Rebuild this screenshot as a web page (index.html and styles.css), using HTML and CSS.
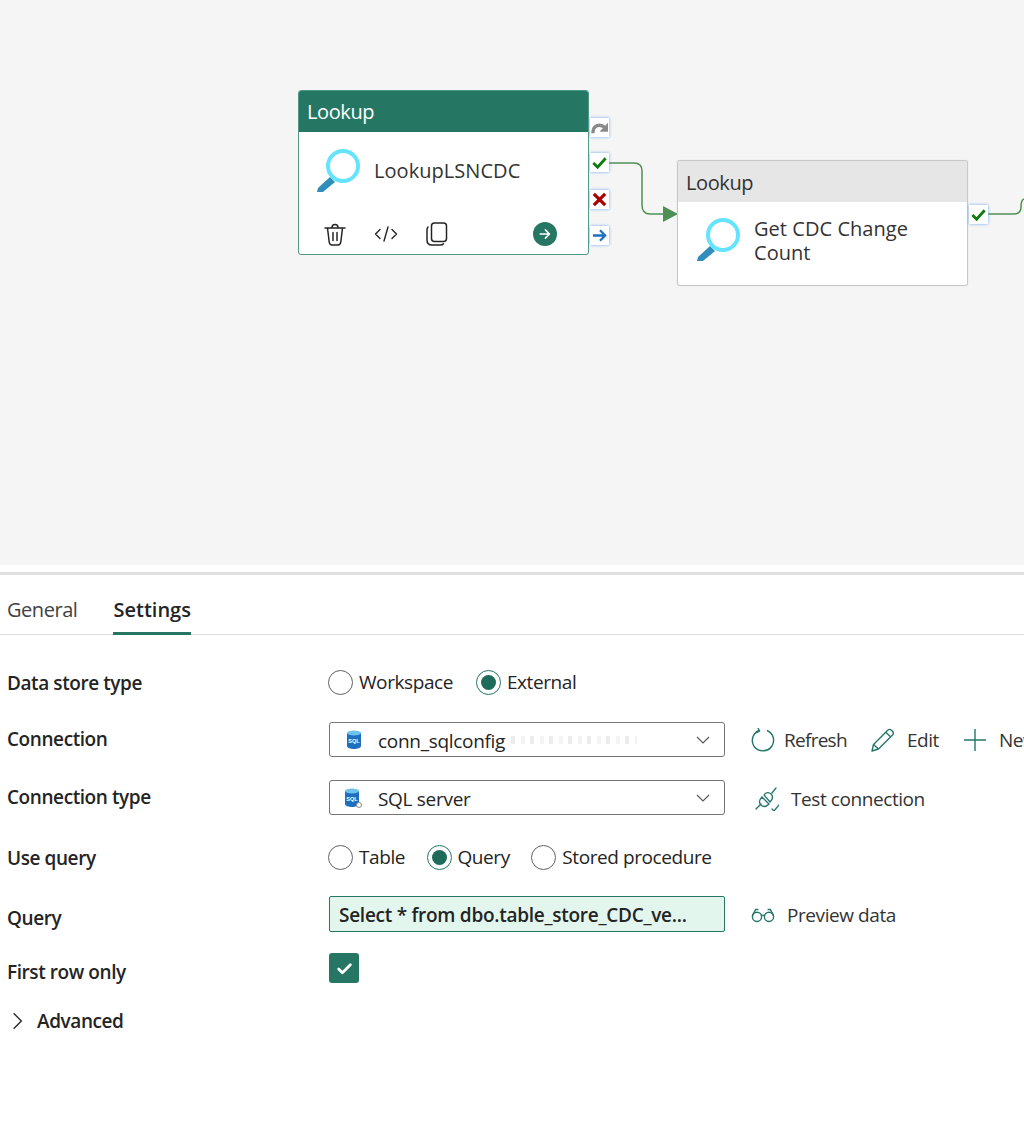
FILE: index.html
```html
<!DOCTYPE html>
<html lang="en">
<head>
<meta charset="utf-8">
<title>Lookup settings</title>
<link rel="stylesheet" href="styles.css">
</head>
<body>
<svg width="0" height="0" class="defs">
  <defs>
    <symbol id="lens" viewBox="0 0 44 44">
      <path d="M1 43 L2 39 L14 28 L19 33 L7 43 Z" fill="#2f8fba"/>
      <circle cx="27" cy="17" r="15" fill="none" stroke="#64e4ff" stroke-width="4"/>
    </symbol>
    <symbol id="cyl" viewBox="0 0 16 20">
      <path d="M1 3 V16 C1 20 15 20 15 16 V3 Z" fill="#1f6fc0"/>
      <ellipse cx="8" cy="3" rx="7" ry="2.600" fill="#6cc4ee"/>
      <text x="8" y="13" class="sql-txt">SQL</text>
    </symbol>
  </defs>
</svg>

<section class="canvas">
  <article class="node node-active node-a">
    <header class="node-head">Lookup</header>
    <div class="node-body">
      <svg class="lens"><use href="#lens"/></svg>
      <span class="node-name">LookupLSNCDC</span>
    </div>
    <div class="node-tools">
      <svg class="tool" viewBox="0 0 24 24" fill="none" stroke="#242424" stroke-width="1.500" stroke-linecap="round" stroke-linejoin="round"><path d="M2 6 H22 M9 5.500 C9 1.500 15 1.500 15 5.500 M4.500 6 L6.200 20 C6.500 22 7.500 23 9 23 H15 C16.500 23 17.500 22 17.800 20 L19.500 6 M10 10.500 V18.500 M14 10.500 V18.500"/></svg>
      <svg class="tool" viewBox="0 0 24 24" fill="none" stroke="#242424" stroke-width="1.400" stroke-linecap="round" stroke-linejoin="round"><path d="M6 7.500 L1.500 12 L6 16.500 M18 7.500 L22.500 12 L18 16.500 M14 5 L10 19"/></svg>
      <svg class="tool" viewBox="0 0 24 24" fill="none" stroke="#242424" stroke-width="1.500" stroke-linecap="round" stroke-linejoin="round"><rect x="6.500" y="1" width="15" height="18.500" rx="3"/><path d="M3 5 C2 6 2 7 2 8 V18 C2 21.500 4 23 7 23 H15 C17 23 18 22.500 18.500 21.800"/></svg>
      <span class="go"><svg viewBox="0 0 24 24" fill="none" stroke="#fff" stroke-width="2" stroke-linecap="round" stroke-linejoin="round"><path d="M5.500 12 H18 M12.500 6.500 L18 12 L12.500 17.500"/></svg></span>
    </div>
  </article>

  <span class="port p1"><svg viewBox="0 0 18 18" fill="none" stroke="#8a8a8a" stroke-width="3.600"><path d="M2 15 C2 7 9 4 15 9.500"/><path d="M18 4 V13.500 H9" fill="#8a8a8a" stroke="none"/></svg></span>
  <span class="port p2"><svg viewBox="0 0 18 18" fill="none" stroke="#107c10" stroke-width="3"><path d="M2.500 9.500 L7 14 L15.500 4.500"/></svg></span>
  <span class="port p3"><svg viewBox="0 0 18 18" fill="none" stroke="#a80000" stroke-width="3.400"><path d="M3 3 L15 15 M15 3 L3 15"/></svg></span>
  <span class="port p4"><svg viewBox="0 0 18 18" fill="none" stroke="#1f6fc0" stroke-width="2.400"><path d="M2 9 H15 M9.500 3.500 L15 9 L9.500 14.500"/></svg></span>

  <svg class="wires" viewBox="0 0 1024 565" fill="none" stroke="#4f8f55" stroke-width="1.500">
    <path d="M608 163 H634 Q642 163 642 171 V205 Q642 214 650 214 H664"/>
    <path d="M663 206 L678 214 L663 222 Z" fill="#4f8f55" stroke="none"/>
    <path d="M988 214 H1014 Q1021 214 1021 207 Q1021 200 1024 199"/>
  </svg>

  <article class="node node-b">
    <header class="node-head">Lookup</header>
    <div class="node-body">
      <svg class="lens"><use href="#lens"/></svg>
      <span class="node-name">Get CDC Change Count</span>
    </div>
  </article>
  <span class="port p5"><svg viewBox="0 0 18 18" fill="none" stroke="#107c10" stroke-width="3"><path d="M2.500 9.500 L7 14 L15.500 4.500"/></svg></span>
</section>

<section class="panel">
  <nav class="tabs">
    <span class="tab">General</span>
    <span class="tab tab-on">Settings</span>
  </nav>
  <div class="form">
    <div class="row r1">
      <label class="lab">Data store type</label>
      <div class="ctl radios">
        <span class="radio"><i class="dot"></i>Workspace</span>
        <span class="radio on"><i class="dot"></i>External</span>
      </div>
    </div>
    <div class="row r2">
      <label class="lab">Connection</label>
      <div class="ctl">
        <div class="select">
          <svg class="sql"><use href="#cyl"/></svg>
          <span class="val">conn_sqlconfig</span><span class="smudge"></span>
          <svg class="chev" viewBox="0 0 14 8" fill="none" stroke="#555" stroke-width="1.100"><path d="M1 1 L7 7 L13 1"/></svg>
        </div>
        <div class="acts">
          <span class="act act-refresh"><svg class="ic" viewBox="0 0 24 24" fill="none" stroke="#24756a" stroke-width="1.400"><path d="M8 2.500 C1 5.500 -0.500 14 3.500 19 C8 24.500 17 24 21 18 C24.500 12 22 5 16 2.500"/><path d="M7 0 L8.500 3 L5 5"/></svg>Refresh</span>
          <span class="act"><svg class="ic" viewBox="0 0 24 24" fill="none" stroke="#24756a" stroke-width="1.400" stroke-linejoin="round"><path d="M1 23 L2.500 16.500 L17 2 C19 0 23.500 4 22 6.500 L7.500 21 Z M15 4.500 L19.800 9 M2.500 16.500 L7.500 21"/></svg>Edit</span>
          <span class="act"><svg class="ic" viewBox="0 0 24 24" fill="none" stroke="#24756a" stroke-width="1.400"><path d="M12 1 V23 M1 12 H23"/></svg>New</span>
        </div>
      </div>
    </div>
    <div class="row r3">
      <label class="lab">Connection type</label>
      <div class="ctl">
        <div class="select">
          <svg class="sql sql-b"><use href="#cyl"/></svg>
          <i class="gear"></i>
          <span class="val">SQL server</span>
          <svg class="chev" viewBox="0 0 14 8" fill="none" stroke="#555" stroke-width="1.100"><path d="M1 1 L7 7 L13 1"/></svg>
        </div>
        <div class="acts acts-test">
          <span class="act"><svg class="ic" viewBox="0 0 24 24" fill="none" stroke="#24756a" stroke-width="1.300" stroke-linecap="round"><path d="M1 22 L6 17 M7 10 L14 17 C11 20 8 20 6 18 C4 16 4 13 7 10 Z M9 8 C11 5 14 5 16 7 C18 9 18 12 15 15 Z M17 6 L21 1 M17 22 L19 24 L24 18"/></svg>Test connection</span>
        </div>
      </div>
    </div>
    <div class="row r4">
      <label class="lab">Use query</label>
      <div class="ctl radios radios-q">
        <span class="radio"><i class="dot"></i>Table</span>
        <span class="radio on"><i class="dot"></i>Query</span>
        <span class="radio"><i class="dot"></i>Stored procedure</span>
      </div>
    </div>
    <div class="row r5">
      <label class="lab">Query</label>
      <div class="ctl">
        <div class="query">Select * from dbo.table_store_CDC_ve...</div>
        <div class="acts acts-preview">
          <span class="act"><svg class="ic ic-g" viewBox="0 0 26 16" fill="none" stroke="#24756a" stroke-width="1.500"><circle cx="6.500" cy="10" r="5"/><circle cx="19.500" cy="10" r="5"/><path d="M11 9 C12 8 14 8 15 9 M1.500 9 L5 2 H8 M24.500 9 L21 2 H18"/></svg>Preview data</span>
        </div>
      </div>
    </div>
    <div class="row r6">
      <label class="lab">First row only</label>
      <div class="ctl">
        <span class="check"><svg viewBox="0 0 16 16" fill="none" stroke="#fff" stroke-width="2.600" stroke-linecap="round" stroke-linejoin="round"><path d="M2.500 8.500 L6 12 L13.500 4.500"/></svg></span>
      </div>
    </div>
    <div class="adv">
      <svg class="adv-ic" viewBox="0 0 10 16" fill="none" stroke="#242424" stroke-width="1.200"><path d="M1.500 1 L8.500 8 L1.500 15"/></svg>
      <span class="lab">Advanced</span>
    </div>
  </div>
</section>
</body>
</html>
```
FILE: styles.css
```css
* { box-sizing: border-box; }
html, body { margin: 0; padding: 0; }
body {
  width: 1024px;
  height: 1132px;
  overflow: hidden;
  background: #fff;
  color: #242424;
  font-family: "Open Sans", "Noto Sans", "Liberation Sans", sans-serif;
  font-size: 19px;
}
.defs { position: absolute; }
.sql-txt {
  font-family: "Liberation Sans", sans-serif;
  font-size: 5.500px;
  font-weight: 700;
  fill: #fff;
  text-anchor: middle;
}

.canvas {
  position: relative;
  height: 565px;
  background: #f5f5f5;
  overflow: hidden;
}
.wires { position: absolute; left: 0; top: 0; width: 1024px; height: 565px; }

.node {
  position: absolute;
  display: flex;
  flex-direction: column;
  background: #fff;
  border: 1px solid #c8c8c8;
  border-radius: 3px;
  overflow: hidden;
  z-index: 1;
}
.node-a { left: 298px; top: 90px; width: 291px; height: 165px; border-color: #4f9985; }
.node-b { left: 677px; top: 160px; width: 291px; height: 126px; box-shadow: 0 0 1px rgba(0,0,0,.2); }
.node-head {
  height: 41px;
  flex: none;
  padding-left: 8px;
  line-height: 41px;
  font-size: 20px;
  letter-spacing: -0.4px;
  background: #e6e6e6;
  color: #333;
}
.node-b .node-head { line-height: 43px; }
.node-active .node-head { background: #257764; color: #fff; line-height: 41px; }
.node-body {
  display: flex;
  align-items: center;
  gap: 14px;
  padding: 0 20px 0 18px;
  height: 80px;
}
.node-a .node-body { height: 78px; padding-left: 17px; }
.node-b .node-body { height: 76px; }
.lens { width: 44px; height: 44px; flex: none; }
.node-name { font-size: 20px; line-height: 24px; letter-spacing: 0.05px; color: #333; }
.node-a .node-name { margin-bottom: 1px; }
.node-b .node-name { margin-top: 2px; }
.node-tools {
  display: flex;
  align-items: center;
  height: 44px;
  padding: 3px 31px 0 24px;
}
.tool { width: 24px; height: 24px; margin-right: 27px; }
.go {
  margin-left: auto;
  width: 24px;
  height: 24px;
  border-radius: 50%;
  background: #257764;
  display: flex;
  align-items: center;
  justify-content: center;
}
.go svg { width: 18px; height: 18px; }

.port {
  position: absolute;
  left: 590px;
  width: 19px;
  height: 19px;
  display: flex;
  align-items: center;
  justify-content: center;
  background: #fff;
  box-shadow: 0 0 3px #6fa8e6;
  z-index: 2;
}
.port svg { width: 17px; height: 17px; }
.p1 { top: 118px; }
.p2 { top: 153px; }
.p3 { top: 190px; }
.p4 { top: 226px; }
.p5 { left: 969px; top: 205px; }

.panel {
  margin-top: 7px;
  border-top: 3px solid #e0e0e0;
}
.tabs {
  display: flex;
  gap: 36px;
  height: 60px;
  padding-left: 7px;
  border-bottom: 1px solid #e0e0e0;
}
.tab {
  height: 60px;
  line-height: 70px;
  font-size: 20px;
  letter-spacing: -0.45px;
  color: #424242;
  display: block;
}
.tab-on {
  font-weight: 600;
  color: #242424;
  letter-spacing: 0;
  border-bottom: 3px solid #257764;
}

.form { padding-left: 7px; }
.row {
  display: grid;
  grid-template-columns: 322px 1fr;
  align-items: center;
}
.lab {
  font-size: 19px;
  font-weight: 600;
  letter-spacing: -0.42px;
  color: #242424;
}
.ctl { display: flex; align-items: center; }
.r1 { margin-top: 29px; height: 36px; }
.r2 { margin-top: 22px; height: 35px; }
.r3 { margin-top: 23px; height: 35px; }
.r4 { margin-top: 25px; height: 34px; }
.r5 { margin-top: 22px; height: 36px; }
.r6 { margin-top: 21px; height: 30px; }
.r1 .lab { padding-top: 2px; }
.r2 .lab { padding-bottom: 1px; }
.r3 .lab { padding-bottom: 1px; }
.r4 .lab { padding-top: 2px; }
.r5 .lab { padding-top: 8px; }
.r6 .lab { padding-top: 8px; }
.r6 { margin-top: 19px; }

.radios { gap: 23px; margin-left: -1px; }
.radios-q { gap: 21.5px; }
.radio {
  display: flex;
  align-items: center;
  gap: 6px;
  font-size: 19px;
  letter-spacing: -0.42px;
}
.dot {
  width: 25px;
  height: 25px;
  border: 1px solid #616161;
  border-radius: 50%;
  display: block;
  position: relative;
  background: #fff;
}
.on .dot { border-color: #257764; }
.on .dot::after {
  content: "";
  position: absolute;
  inset: 4px;
  border-radius: 50%;
  background: #1f6b5a;
}

.select {
  position: relative;
  width: 396px;
  height: 35px;
  flex: none;
  display: flex;
  align-items: center;
  border: 1px solid #757575;
  border-radius: 3px;
  padding: 0 14px 0 16px;
  background: #fff;
}
.sql { width: 16px; height: 20px; margin-right: 16px; flex: none; }
.sql-b { margin-left: -2px; margin-right: 18px; }
.gear {
  position: absolute;
  left: 26px;
  top: 21px;
  width: 6px;
  height: 6px;
  border: 1.500px solid #888;
  border-radius: 50%;
  background: #fff;
}
.val { font-size: 19px; letter-spacing: -0.3px; padding-top: 2px; }
.smudge {
  width: 126px;
  height: 8px;
  margin-left: 6px;
  background: repeating-linear-gradient(90deg, #ececec 0 4px, #fff 4px 10px, #f4f4f4 10px 14px, #fff 14px 19px);
}
.chev { width: 14px; height: 8px; margin-left: auto; }

.acts { display: flex; align-items: center; gap: 24px; margin-left: 26px; white-space: nowrap; }
.acts-test { margin-left: 30px; padding-top: 2px; }
.acts-preview { padding-top: 2px; }
.act {
  display: flex;
  align-items: center;
  gap: 12px;
  font-size: 19px;
  letter-spacing: -0.42px;
  color: #333;
}
.act-refresh { gap: 9px; letter-spacing: -0.72px; }
.ic { width: 24px; height: 24px; flex: none; }
.ic-g { height: 16px; }

.query {
  width: 396px;
  height: 36px;
  flex: none;
  line-height: 37px;
  padding-left: 9px;
  border: 1px solid #257764;
  border-radius: 2px;
  background: #e3f6ee;
  font-size: 19px;
  font-weight: 600;
  letter-spacing: -0.27px;
  white-space: nowrap;
}
.check {
  width: 30px;
  height: 30px;
  border-radius: 3px;
  background: #257764;
  display: flex;
  align-items: center;
  justify-content: center;
}
.check svg { width: 17px; height: 17px; }

.adv {
  display: flex;
  align-items: center;
  gap: 14px;
  margin-top: 24px;
  margin-left: 5px;
  height: 32px;
}
.adv-ic { width: 11px; height: 18px; }
```
